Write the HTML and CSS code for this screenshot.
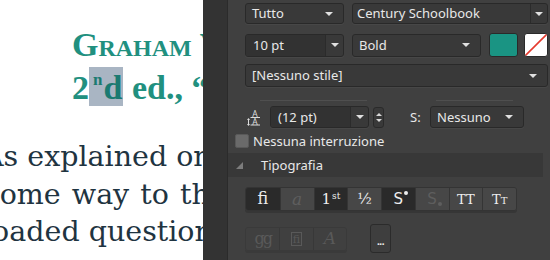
FILE: index.html
```html
<!DOCTYPE html>
<html lang="it">
<head>
<meta charset="utf-8">
<title>Carattere</title>
<link rel="stylesheet" href="styles.css">
</head>
<body>
<div class="page">
  <div class="doc">
    <div class="head">
      <div class="h1">G<span class="sc">raham</span> Vickers</div>
      <div class="h2">2<span class="hl"><span class="sup">n</span>d</span> ed., “The</div>
    </div>
    <div class="text">
      <div>As explained on the</div>
      <div class="l2">some way to the</div>
      <div>loaded question</div>
    </div>
  </div>
  <div class="strip"></div>
  <div class="panel">
    <div class="row r1">
      <div class="field dd w99"><span class="lbl">Tutto</span><i class="arr"></i></div>
      <div class="field combo w196"><span class="txt">Century Schoolbook</span><span class="btn"><i class="arr"></i></span></div>
    </div>
    <div class="row r2">
      <div class="field combo edit w99"><span class="txt">10 pt</span><span class="btn"><i class="arr"></i></span></div>
      <div class="field dd w129"><span class="lbl">Bold</span><i class="arr"></i></div>
      <div class="swatch teal"></div>
      <div class="swatch none">
        <svg width="22" height="22" viewBox="0 0 22 22"><line x1="0" y1="22" x2="22" y2="0" stroke="#e53a2e" stroke-width="1.6"/></svg>
      </div>
    </div>
    <div class="row r3">
      <div class="field dd w303"><span class="lbl">[Nessuno stile]</span><i class="arr"></i></div>
    </div>
    <div class="sep"><span class="s1"></span><span class="s2"></span></div>
    <div class="row r4">
      <svg class="lead" width="14" height="17" viewBox="0 0 14 17">
        <text x="8" y="7.5" font-size="8.5" fill="#dcdcdc" text-anchor="middle" font-family="Noto Sans, sans-serif">A</text>
        <line x1="3.5" y1="8.5" x2="13" y2="8.5" stroke="#dcdcdc" stroke-width="1"/>
        <text x="8" y="15.5" font-size="8.5" fill="#dcdcdc" text-anchor="middle" font-family="Noto Sans, sans-serif">A</text>
        <line x1="3.5" y1="16" x2="13" y2="16" stroke="#dcdcdc" stroke-width="1"/>
        <line x1="1.5" y1="10" x2="1.5" y2="16" stroke="#dcdcdc" stroke-width="1"/>
        <polygon points="0,11 3,11 1.5,9" fill="#dcdcdc"/>
        <polygon points="0,15 3,15 1.5,17" fill="#dcdcdc"/>
      </svg>
      <div class="field combo edit w99"><span class="txt">(12 pt)</span><span class="btn"><i class="arr"></i></span></div>
      <div class="spin"><i class="up"></i><i class="down"></i></div>
      <span class="slbl">S:</span>
      <div class="field dd w94"><span class="lbl">Nessuno</span><i class="arr"></i></div>
    </div>
    <div class="row chk">
      <span class="box"></span><span class="clbl">Nessuna interruzione</span>
    </div>
    <div class="section">
      <svg class="tri" width="7" height="7" viewBox="0 0 7 7"><polygon points="7,0 7,7 0,7" fill="#7c7c7c"/></svg>
      <span>Tipografia</span>
    </div>
    <div class="group g1">
      <div class="gb on"><span class="lig">ﬁ</span></div>
      <div class="gb dis"><span class="ita">a</span></div>
      <div class="gb on"><span class="ord">1<sup>st</sup></span></div>
      <div class="gb"><span class="frac">½</span></div>
      <div class="gb on"><span class="sups">S<b class="dot"></b></span></div>
      <div class="gb dis"><span class="subs">S<b class="dot"></b></span></div>
      <div class="gb"><span class="tt">TT</span></div>
      <div class="gb"><span class="tt">T<small>T</small></span></div>
    </div>
    <div class="row bottom">
      <div class="group g2">
        <div class="gb dis"><span class="gg">gg</span></div>
        <div class="gb dis"><span class="boxfi">ﬁ</span></div>
        <div class="gb dis"><span class="scr">A</span></div>
      </div>
      <div class="more">...</div>
    </div>
  </div>
</div>
</body>
</html>
```

FILE: styles.css
```css
* { box-sizing: border-box; margin: 0; padding: 0; }
html, body { width: 550px; height: 260px; overflow: hidden; }
body { background: #fff; font-family: "Noto Sans", "Open Sans", sans-serif; }

.page { display: flex; width: 550px; height: 260px; }

/* document */
.doc { width: 203px; flex: none; overflow: hidden; background: #fff; }
.head {
  padding: 25px 0 0 72px;
  font-family: "Liberation Serif", "DejaVu Serif", serif;
  font-weight: bold;
  font-size: 34px;
  line-height: 40px;
  color: #21907f;
  white-space: nowrap;
}
.sc { font-size: 24px; text-transform: uppercase; }
.hl { background: #a9b5c3; color: #1b7a71; padding: 2px 1px 0 4px; }
.sup { font-size: 17px; vertical-align: 14px; line-height: 0; margin-right: 1px; }
.text {
  margin-top: 30px;
  margin-left: -17px;
  font-family: "DejaVu Serif", serif;
  font-size: 28.5px;
  line-height: 37.5px;
  color: #1f3441;
  white-space: nowrap;
}
.l2 { margin-left: 2px; word-spacing: 2px; }

/* panel */
.strip { width: 24px; flex: none; background: #333333; }
.panel {
  width: 323px;
  flex: none;
  background: #404040;
  border-left: 1px solid #2b2b2b;
  padding: 3px 0 0 17px;
  color: #e8e8e8;
  font-size: 13px;
  overflow: hidden;
}
.row { display: flex; align-items: center; }
.r1 { height: 21px; gap: 8px; }
.r2 { margin-top: 9px; height: 24px; gap: 8px; }
.r3 { margin-top: 7px; height: 23px; }
.r4 { margin-top: 5px; height: 22px; }

.field {
  height: 100%;
  display: flex;
  align-items: center;
  background: #393939;
  border: 1px solid #292929;
  border-radius: 3px;
  box-shadow: 0 1px 0 #474747;
  flex: none;
}
.r2 .field { height: 23px; }
.w99 { width: 99px; }
.w94 { width: 94px; }
.w129 { width: 129px; }
.w196 { width: 196px; }
.w303 { width: 303px; }

.dd { justify-content: space-between; padding: 0 10px 0 6px; }
.lbl, .txt { white-space: nowrap; line-height: 1; }
.combo .txt { flex: 1; height: 100%; display: flex; align-items: center; padding-left: 4px; }
.combo.edit .txt { background: #323232; border-radius: 2px 0 0 2px; padding-left: 7px; }
.combo .btn {
  width: 17px; height: 100%;
  border-left: 1px solid #2b2b2b;
  display: flex; align-items: center; justify-content: center;
}
.w99.combo .btn { width: 18px; }
.arr {
  width: 0; height: 0;
  border-left: 4px solid transparent;
  border-right: 4px solid transparent;
  border-top: 4px solid #e0e0e0;
}

.swatch { height: 24px; flex: none; border-radius: 3px; border: 1px solid #2a2a2a; overflow: hidden; }
.teal { width: 29px; background: #1a9483; }
.none { width: 24px; margin-left: -2px; background: #fff; }
.none svg { display: block; }

.sep { position: relative; height: 1px; margin-top: 13px; }
.sep span { position: absolute; top: 0; height: 1px; background: #4f4f4f; }
.s1 { left: 15px; width: 107px; }
.s2 { left: 191px; width: 77px; }

.lead { margin-left: 2px; flex: none; }
.r4 .combo { margin-left: 9px; }
.spin {
  margin-left: 4px;
  width: 11px; height: 21px;
  border: 1px solid #2a2a2a;
  border-radius: 3px;
  background: #393939;
  display: flex; flex-direction: column; align-items: center; justify-content: center; gap: 3px;
}
.spin .up { width: 0; height: 0; border-left: 3px solid transparent; border-right: 3px solid transparent; border-bottom: 3px solid #d8d8d8; }
.spin .down { width: 0; height: 0; border-left: 3px solid transparent; border-right: 3px solid transparent; border-top: 3px solid #d8d8d8; }
.slbl { margin-left: 26px; width: 20px; }

.chk { margin-top: 4px; height: 18px; margin-left: -10px; }
.box { width: 14px; height: 14px; background: #6a6a6a; border: 1px solid #595959; border-radius: 2px; flex: none; }
.clbl { margin-left: 4px; white-space: nowrap; }

.section {
  margin: 3px 0 0 -17px;
  width: 315px;
  height: 24px;
  background: #383838;
  display: flex;
  align-items: center;
}
.tri { margin-left: 8px; flex: none; }
.section span { margin-left: 18px; }

.group {
  display: flex;
  border: 1px solid #343434;
  border-radius: 3px;
  box-shadow: 0 2px 0 #363636;
  overflow: hidden;
  flex: none;
}
.g1 { margin-top: 10px; width: 272px; height: 24px; }
.gb {
  width: 34px;
  height: 100%;
  background: #474747;
  border-left: 1px solid #353535;
  display: flex; align-items: center; justify-content: center;
  font-family: "DejaVu Serif", serif;
  color: #eeeeee;
  font-size: 15px;
  line-height: 1;
}
.gb:first-child { border-left: 0; }
.gb.on { background: #2a2a2a; }
.gb.dis { color: #5e5e5e; }
.lig { font-size: 16px; }
.ita { font-style: italic; font-size: 17px; }
.ord sup { font-size: 9px; vertical-align: 5px; margin-left: 1px; }
.frac { font-size: 15px; }
.sups, .subs { position: relative; font-family: "DejaVu Sans", sans-serif; font-size: 15px; }
.dot { position: absolute; width: 4px; height: 4px; border-radius: 50%; background: currentColor; right: -5px; }
.sups .dot { top: -1px; }
.subs .dot { bottom: 1px; }
.tt { font-size: 13px; letter-spacing: 0; }
.tt small { font-size: 10px; }

.bottom { margin-top: 13px; height: 29px; }
.g2 { width: 102px; height: 24px; border-color: #3a3a3a; box-shadow: 0 2px 0 #3a3a3a; }
.g2 .gb { background: #404040; border-left-color: #383838; color: #595959; }
.g2 .gb:first-child { border-left: 0; }
.gg { font-size: 16px; letter-spacing: -2px; }
.boxfi { font-size: 11px; border: 1px solid #595959; padding: 1px 1px 0; line-height: 1; }
.scr { font-style: italic; font-size: 17px; }
.more {
  margin-left: 23px;
  width: 21px; height: 29px;
  border: 1px solid #2b2b2b;
  border-radius: 3px;
  background: #3e3e3e;
  color: #f0f0f0;
  font-size: 10px;
  letter-spacing: -0.5px;
  display: flex; align-items: center; justify-content: center;
  padding-top: 4px;
  font-weight: bold;
}
```
